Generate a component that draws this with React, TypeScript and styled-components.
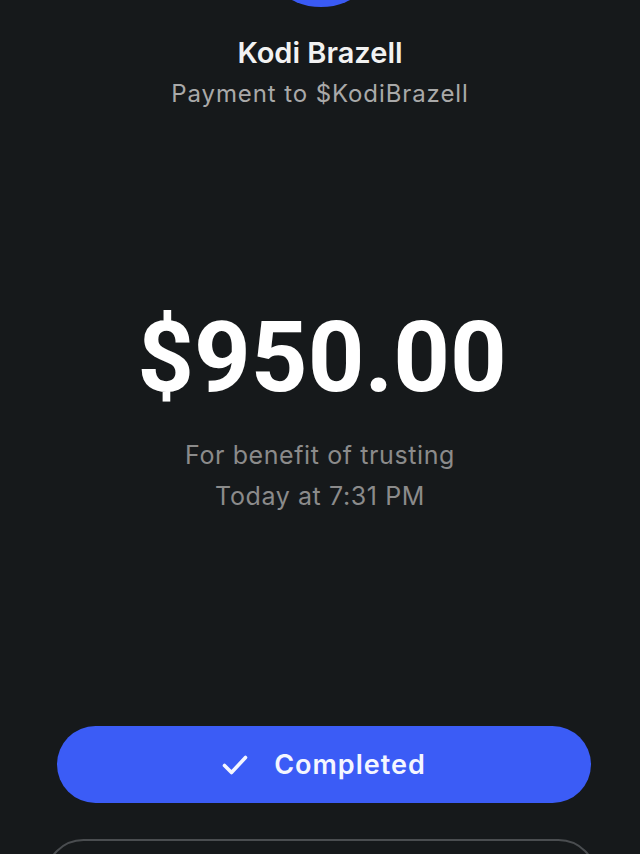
import styled, { createGlobalStyle } from "styled-components";

const GlobalStyle = createGlobalStyle`
  html, body {
    margin: 0;
    padding: 0;
    background: #16191b;
  }
  body {
    font-family: Inter, "Open Sans", Roboto, sans-serif;
    -webkit-font-smoothing: antialiased;
  }
`;

const Screen = styled.div`
  width: 640px;
  height: 854px;
  overflow: hidden;
  display: flex;
  flex-direction: column;
  align-items: center;
  background: #16191b;
`;

const Avatar = styled.div`
  width: 128px;
  height: 128px;
  border-radius: 50%;
  background: #3a5af4;
  margin-top: -121px;
  margin-left: 2px;
  flex-shrink: 0;
`;

const Name = styled.div`
  margin-top: 28px;
  font-size: 29px;
  font-weight: 600;
  color: #f2f2f2;
  line-height: 36px;
`;

const Subtitle = styled.div`
  margin-top: 8px;
  font-size: 24px;
  letter-spacing: 0.9px;
  color: #a9a9a9;
  line-height: 30px;
`;

const Amount = styled.div`
  margin-top: 193px;
  font-family: Roboto, Inter, sans-serif;
  font-size: 99px;
  font-weight: 700;
  color: #ffffff;
  letter-spacing: 0;
  line-height: 110px;
  margin-left: 4px;
`;

const Note = styled.div<{ first?: boolean }>`
  margin-top: ${({ first }) => (first ? "27px" : "9px")};
  font-size: 25px;
  letter-spacing: 0.6px;
  color: #8b8b8b;
  line-height: 32px;
`;

const Actions = styled.div`
  margin-top: auto;
  width: 100%;
  display: flex;
  flex-direction: column;
  align-items: center;
  gap: 36px;
  margin-bottom: -62px;
`;

const PrimaryButton = styled.button`
  width: 534px;
  height: 77px;
  margin-left: 8px;
  border: none;
  border-radius: 39px;
  background: #3b5cf6;
  color: #f4f6ff;
  display: flex;
  align-items: center;
  justify-content: center;
  gap: 26px;
  font-family: inherit;
  font-size: 27px;
  letter-spacing: 1px;
  font-weight: 600;
  padding: 0;
`;

const OutlineButton = styled.button`
  width: 552px;
  height: 77px;
  margin-left: 2px;
  border: 2px solid #4a4d50;
  border-radius: 40px;
  background: transparent;
  padding: 0;
`;

const CheckIcon = () => (
  <svg width="26" height="22" viewBox="0 0 26 22" fill="none">
    <path
      d="M2.5 11.5 L9.5 18.5 L23.5 3.5"
      stroke="#f4f6ff"
      strokeWidth="3.6"
      strokeLinecap="round"
      strokeLinejoin="round"
    />
  </svg>
);

const App = () => {
  return (
    <>
      <GlobalStyle />
      <Screen>
        <Avatar />
        <Name>Kodi Brazell</Name>
        <Subtitle>Payment to $KodiBrazell</Subtitle>
        <Amount>$950.00</Amount>
        <Note first>For benefit of trusting</Note>
        <Note>Today at 7:31 PM</Note>
        <Actions>
          <PrimaryButton>
            <CheckIcon />
            Completed
          </PrimaryButton>
          <OutlineButton />
        </Actions>
      </Screen>
    </>
  );
};

export default App;
